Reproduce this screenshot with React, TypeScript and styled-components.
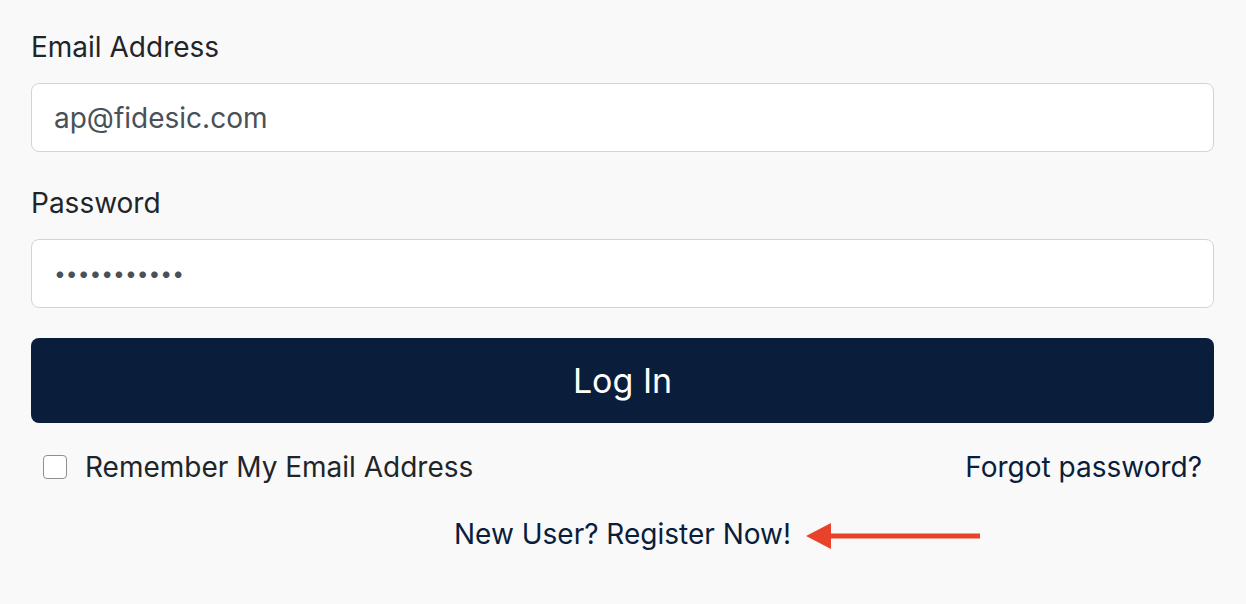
import React from 'react';
import styled, { createGlobalStyle } from 'styled-components';

const GlobalStyle = createGlobalStyle`
    html, body {
        margin: 0;
        padding: 0;
        background: #f9f9f9;
    }
    body {
        font-family: Inter, "Noto Sans", "Liberation Sans", sans-serif;
        color: #212529;
    }
`;

const Page = styled.div`
    width: 1246px;
    height: 604px;
    box-sizing: border-box;
    padding: 26px 32px 0 31px;
    background: #f9f9f9;
`;

const Form = styled.form`
    display: flex;
    flex-direction: column;
`;

const Field = styled.div`
    display: flex;
    flex-direction: column;
    margin-bottom: 30px;
`;

const Label = styled.label`
    font-size: 28px;
    line-height: 42px;
    color: #212529;
    margin-bottom: 15px;
`;

const Input = styled.input`
    box-sizing: border-box;
    height: 69px;
    width: 100%;
    padding: 0 22px;
    font-family: inherit;
    font-size: 28px;
    color: #495057;
    background: #ffffff;
    border: 1px solid #d4d4d4;
    border-radius: 8px;
    outline: none;

    &[type='password'] {
        letter-spacing: 0;
        font-size: 21px;
    }
`;

const LoginButton = styled.button`
    height: 85px;
    width: 100%;
    border: none;
    border-radius: 8px;
    background: #0a1e3c;
    color: #ffffff;
    font-family: inherit;
    font-size: 34px;
    cursor: pointer;
`;

const OptionsRow = styled.div`
    display: flex;
    align-items: center;
    justify-content: space-between;
    height: 42px;
    margin-top: 23px;
    padding: 0 12px;
`;

const CheckLabel = styled.label`
    display: flex;
    align-items: center;
    gap: 18px;
    font-size: 28px;
    color: #212529;
`;

const Checkbox = styled.input`
    appearance: none;
    margin: 0;
    width: 24px;
    height: 24px;
    background: #ffffff;
    border: 1px solid #8e8e93;
    border-radius: 4px;
`;

const TextLink = styled.a`
    font-size: 28px;
    color: #0a1e3c;
    text-decoration: none;
`;

const RegisterRow = styled.div`
    display: flex;
    justify-content: center;
    margin-top: 25px;
    line-height: 42px;
`;

const RegisterWrap = styled.span`
    position: relative;
`;

const Pointer = styled.svg`
    position: absolute;
    left: calc(100% + 15px);
    top: 50%;
    transform: translateY(-50%);
`;

const App = () => {
    return (
        <>
            <GlobalStyle />
            <Page>
                <Form onSubmit={(e) => e.preventDefault()}>
                    <Field>
                        <Label htmlFor="email">Email Address</Label>
                        <Input id="email" type="text" defaultValue="ap@fidesic.com" />
                    </Field>
                    <Field>
                        <Label htmlFor="password">Password</Label>
                        <Input id="password" type="password" defaultValue="12345678901" />
                    </Field>
                    <LoginButton type="submit">Log In</LoginButton>
                    <OptionsRow>
                        <CheckLabel>
                            <Checkbox type="checkbox" />
                            Remember My Email Address
                        </CheckLabel>
                        <TextLink href="#">Forgot password?</TextLink>
                    </OptionsRow>
                    <RegisterRow>
                        <RegisterWrap>
                            <TextLink href="#">New User? Register Now!</TextLink>
                            {/* annotation arrow pointing at the register link */}
                            <Pointer width="174" height="26" viewBox="0 0 174 26">
                                <polygon points="0,13 25,0 25,26" fill="#e8432a" />
                                <rect x="24" y="10.5" width="150" height="5" fill="#e8432a" />
                            </Pointer>
                        </RegisterWrap>
                    </RegisterRow>
                </Form>
            </Page>
        </>
    );
};

export default App;
